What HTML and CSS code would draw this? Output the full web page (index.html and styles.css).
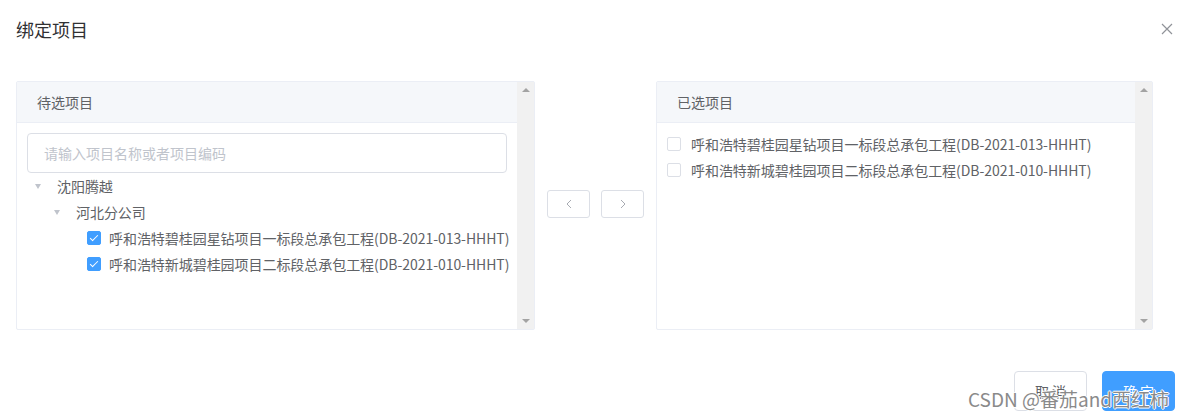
FILE: index.html
```html
<!DOCTYPE html>
<html lang="zh">
<head>
<meta charset="utf-8">
<title>绑定项目</title>
<link rel="stylesheet" href="styles.css">
</head>
<body>
<div class="dialog">
  <div class="dialog-header">
    <span class="dialog-title">绑定项目</span>
    <span class="close-btn">
      <svg width="12" height="12" viewBox="0 0 12 12"><path d="M1 1L11 11M11 1L1 11" stroke="#909399" stroke-width="1.2" fill="none"/></svg>
    </span>
  </div>
  <div class="dialog-body">
    <div class="panel panel-left">
      <div class="panel-main">
        <div class="panel-header">待选项目</div>
        <div class="panel-content">
          <div class="search-box">请输入项目名称或者项目编码</div>
          <div class="tree">
            <div class="tree-node level-1"><span class="caret"></span><span class="node-label">沈阳腾越</span></div>
            <div class="tree-node level-2"><span class="caret"></span><span class="node-label">河北分公司</span></div>
            <div class="tree-node level-3"><span class="checkbox checked"></span><span class="node-label">呼和浩特碧桂园星钻项目一标段总承包工程(DB-2021-013-HHHT)</span></div>
            <div class="tree-node level-3"><span class="checkbox checked"></span><span class="node-label">呼和浩特新城碧桂园项目二标段总承包工程(DB-2021-010-HHHT)</span></div>
          </div>
        </div>
      </div>
      <div class="scrollbar"><span class="arrow-up"></span><span class="arrow-down"></span></div>
    </div>
    <div class="transfer-buttons">
      <button class="transfer-btn">
        <svg width="8" height="10" viewBox="0 0 8 10"><path d="M6 1L2 5L6 9" stroke="#a8abb2" stroke-width="1" fill="none"/></svg>
      </button>
      <button class="transfer-btn">
        <svg width="8" height="10" viewBox="0 0 8 10"><path d="M2 1L6 5L2 9" stroke="#a8abb2" stroke-width="1" fill="none"/></svg>
      </button>
    </div>
    <div class="panel panel-right">
      <div class="panel-main">
        <div class="panel-header">已选项目</div>
        <div class="panel-content list">
          <div class="list-item"><span class="checkbox"></span><span class="node-label">呼和浩特碧桂园星钻项目一标段总承包工程(DB-2021-013-HHHT)</span></div>
          <div class="list-item"><span class="checkbox"></span><span class="node-label">呼和浩特新城碧桂园项目二标段总承包工程(DB-2021-010-HHHT)</span></div>
        </div>
      </div>
      <div class="scrollbar"><span class="arrow-up"></span><span class="arrow-down"></span></div>
    </div>
  </div>
  <div class="dialog-footer">
    <button class="btn btn-default">取 消</button>
    <button class="btn btn-primary">确 定</button>
  </div>
  <div class="watermark">CSDN @番茄and西红柿</div>
</div>
</body>
</html>
```
FILE: styles.css
```css
* { box-sizing: border-box; }
html, body {
  margin: 0;
  padding: 0;
  background: #ffffff;
  font-family: "Noto Sans CJK SC", "Microsoft YaHei", sans-serif;
  color: #606266;
}
.dialog {
  position: relative;
  width: 1187px;
  height: 420px;
  overflow: hidden;
}
.dialog-header {
  display: flex;
  justify-content: space-between;
  align-items: center;
  padding: 14px 14px 0 16px;
  height: 44px;
}
.dialog-title {
  font-size: 18px;
  line-height: 28px;
  color: #303133;
}
.close-btn {
  display: flex;
  align-items: center;
}
.dialog-body {
  display: flex;
  padding: 37px 0 0 16px;
}
.panel {
  display: flex;
  height: 249px;
  border: 1px solid #ebeef5;
  border-radius: 2px;
  background: #fff;
}
.panel-left { width: 519px; }
.panel-right { width: 497px; }
.panel-main {
  flex: 1;
  display: flex;
  flex-direction: column;
  min-width: 0;
}
.panel-header {
  height: 41px;
  background: #f5f7fa;
  border-bottom: 1px solid #ebeef5;
  padding-left: 20px;
  font-size: 14px;
  line-height: 41px;
  color: #606266;
}
.panel-content {
  padding: 10px 10px 0 10px;
}
.search-box {
  height: 40px;
  border: 1px solid #dcdfe6;
  border-radius: 4px;
  padding-left: 16px;
  font-size: 14px;
  line-height: 38px;
  color: #c0c4cc;
}
.tree-node, .list-item {
  display: flex;
  align-items: center;
  height: 26px;
  font-size: 14px;
  color: #606266;
  white-space: nowrap;
  letter-spacing: -0.05px;
}
.level-1 { padding-left: 8px; }
.level-2 { padding-left: 27px; }
.level-3 { padding-left: 60px; }
.caret {
  width: 0;
  height: 0;
  border-left: 3.5px solid transparent;
  border-right: 3.5px solid transparent;
  border-top: 5px solid #c0c4cc;
  margin-right: 16px;
}
.checkbox {
  width: 14px;
  height: 14px;
  border: 1px solid #dcdfe6;
  border-radius: 2px;
  background: #fff;
  margin-right: 8px;
  flex: none;
  position: relative;
}
.checkbox.checked {
  background: #409eff;
  border-color: #409eff;
}
.checkbox.checked::after {
  content: "";
  position: absolute;
  left: 4px;
  top: 1px;
  width: 3px;
  height: 7px;
  border: 1px solid #fff;
  border-left: 0;
  border-top: 0;
  transform: rotate(45deg);
}
.list {
  padding: 8px 0 0 10px;
}
.list-item .checkbox { margin-right: 10px; }
.scrollbar {
  width: 17px;
  background: #f1f1f1;
  display: flex;
  flex-direction: column;
  justify-content: space-between;
  align-items: center;
  padding: 6px 0;
}
.arrow-up {
  width: 0; height: 0;
  border-left: 4px solid transparent;
  border-right: 4px solid transparent;
  border-bottom: 4px solid #a3a3a3;
}
.arrow-down {
  width: 0; height: 0;
  border-left: 4px solid transparent;
  border-right: 4px solid transparent;
  border-top: 4px solid #a3a3a3;
}
.transfer-buttons {
  display: flex;
  gap: 11px;
  padding: 109px 12px 0 12px;
}
.transfer-btn {
  width: 43px;
  height: 28px;
  border: 1px solid #dcdfe6;
  border-radius: 3px;
  background: #fff;
  display: flex;
  align-items: center;
  justify-content: center;
  padding: 0;
  margin: 0;
}
.dialog-footer {
  display: flex;
  justify-content: flex-end;
  gap: 15px;
  padding: 41px 12px 0 0;
}
.btn {
  width: 73px;
  height: 40px;
  border-radius: 4px;
  font-family: "Noto Sans CJK SC", sans-serif;
  font-size: 14px;
  margin: 0;
  padding: 0;
}
.btn-default {
  background: #fff;
  border: 1px solid #dcdfe6;
  color: #606266;
}
.btn-primary {
  background: #409eff;
  border: 1px solid #409eff;
  color: #fff;
}
.watermark {
  position: absolute;
  left: 968px;
  top: 386px;
  font-family: "Noto Sans CJK SC", sans-serif;
  font-size: 19px;
  line-height: 26px;
  color: #8a8a8a;
  text-shadow: 1px 0 0 #fff, -1px 0 0 #fff, 0 1px 0 #fff, 0 -1px 0 #fff;
  white-space: nowrap;
}
```
